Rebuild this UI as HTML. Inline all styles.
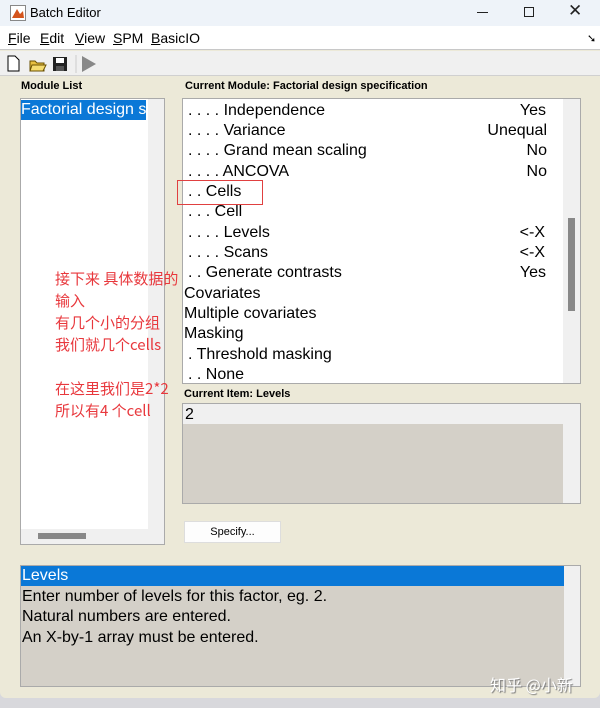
<!DOCTYPE html>
<html><head><meta charset="utf-8"><style>
*{margin:0;padding:0;box-sizing:border-box}
body{width:600px;height:708px;overflow:hidden;background:#d8d8dc;font-family:"Liberation Sans","Noto Sans CJK SC",sans-serif;position:relative}
.a{position:absolute}
.win{left:0;top:0;width:600px;height:698px;background:#ece9d8;border-radius:0 0 6px 6px}
.title{left:0;top:0;width:600px;height:26px;background:#eef3f9}
.menu{left:0;top:26px;width:600px;height:24px;background:#fff;border-bottom:1px solid #c8c8c8;font-size:14px}
.menu span{position:absolute;top:4px}
.tool{left:0;top:51px;width:600px;height:25px;background:#f0f0f0;border-bottom:1px solid #d0d0d0}
.lbl{font-size:11px;font-weight:bold;color:#000}
.row{position:absolute;font-size:16px;line-height:20px;white-space:pre}
.val{position:absolute;font-size:16px;line-height:20px;text-align:right;width:100px}
.ann{color:#e8383d;font-size:15px;line-height:22px;left:55px;top:268px;white-space:pre;font-family:"Noto Sans CJK SC","Liberation Sans",sans-serif}
</style></head><body>
<div class="a win"></div>
<div class="a title">
<svg class="a" style="left:10px;top:5px" width="16" height="16"><rect x="0.5" y="0.5" width="15" height="15" fill="#fff" stroke="#888"/><path d="M2 13 L7 4 L10 9 L13 6 L14 13Z" fill="#d4541c"/></svg>
<div class="a" style="left:30px;top:5px;font-size:13px">Batch Editor</div>
<div class="a" style="left:477px;top:12px;width:11px;height:1px;background:#222"></div>
<div class="a" style="left:524px;top:7px;width:10px;height:10px;border:1px solid #222"></div>
<div class="a" style="left:568px;top:1px;font-size:17px;color:#222">✕</div>
</div>
<div class="a menu"><span style="left:8px"><u>F</u>ile</span><span style="left:40px"><u>E</u>dit</span><span style="left:75px"><u>V</u>iew</span><span style="left:113px"><u>S</u>PM</span><span style="left:151px"><u>B</u>asicIO</span><span style="left:587px;font-size:11px;top:6px">➘</span></div>
<div class="a tool">
<svg class="a" style="left:6px;top:4px" width="90" height="18"><path d="M2 1h7l4 4v11H2z" fill="#fff" stroke="#000"/><path d="M24 6h5l2 2h7v8H24z" fill="#e8c040" stroke="#6a5000"/><path d="M26 10h14l-3 6H24z" fill="#f5dc70" stroke="#6a5000"/><rect x="47" y="2" width="14" height="14" fill="#222"/><rect x="50" y="3" width="8" height="5" fill="#fff"/><rect x="50" y="11" width="8" height="5" fill="#555"/><line x1="70" y1="0" x2="70" y2="18" stroke="#ccc"/><path d="M76 1l14 8-14 8z" fill="#888"/></svg>
</div>
<div class="a lbl" style="left:21px;top:80px">Module List</div>
<div class="a lbl" style="left:185px;top:80px">Current Module: Factorial design specification</div>
<div class="a" style="left:20px;top:98px;width:145px;height:447px;background:#f0f0f0;border:1px solid #aaa"></div>
<div class="a" style="left:21px;top:99px;width:127px;height:430px;background:#fff"></div>
<div class="a" style="left:21px;top:100px;width:125px;height:20px;background:#0a78d7;color:#fff;font-size:16px;line-height:20px;overflow:hidden;white-space:nowrap">Factorial design s</div>
<div class="a" style="left:38px;top:533px;width:48px;height:6px;background:#888"></div>

<div class="a" style="left:182px;top:98px;width:399px;height:286px;background:#fff;border:1px solid #aaa;overflow:hidden">
<div class="a" style="left:380px;top:0;width:18px;height:286px;background:#f0f0f0"></div>
<div class="a" style="left:385px;top:119px;width:7px;height:93px;background:#888"></div>
</div>
<div class="row" style="left:188px;top:101px">. . . . Independence</div><div class="val" style="left:446px;top:101px">Yes</div>
<div class="row" style="left:188px;top:121px">. . . . Variance</div><div class="val" style="left:447px;top:121px">Unequal</div>
<div class="row" style="left:188px;top:141px">. . . . Grand mean scaling</div><div class="val" style="left:447px;top:141px">No</div>
<div class="row" style="left:188px;top:162px">. . . . ANCOVA</div><div class="val" style="left:447px;top:162px">No</div>
<div class="row" style="left:188px;top:182px">. . Cells</div>
<div class="row" style="left:188px;top:202px">. . . Cell</div>
<div class="row" style="left:188px;top:223px">. . . . Levels</div><div class="val" style="left:445px;top:223px">&lt;-X</div>
<div class="row" style="left:188px;top:243px">. . . . Scans</div><div class="val" style="left:445px;top:243px">&lt;-X</div>
<div class="row" style="left:188px;top:263px">. . Generate contrasts</div><div class="val" style="left:446px;top:263px">Yes</div>
<div class="row" style="left:184px;top:284px">Covariates</div>
<div class="row" style="left:184px;top:304px">Multiple covariates</div>
<div class="row" style="left:184px;top:324px">Masking</div>
<div class="row" style="left:188px;top:345px">. Threshold masking</div>
<div class="row" style="left:188px;top:365px;height:18px;overflow:hidden">. . None</div>
<div class="a" style="left:177px;top:180px;width:86px;height:25px;border:1.5px solid #e04040"></div>

<div class="a lbl" style="left:184px;top:388px">Current Item: Levels</div>
<div class="a" style="left:182px;top:403px;width:399px;height:101px;background:#f0f0f0;border:1px solid #aaa">
<div class="a" style="left:0;top:20px;width:380px;height:79px;background:#d4d0c8"></div>
<div class="a" style="left:2px;top:1px;font-size:16px;line-height:20px">2</div>
</div>
<div class="a" style="left:184px;top:521px;width:97px;height:22px;background:#fdfdfd;border:1px solid #ddd;font-size:11px;text-align:center;line-height:21px">Specify...</div>

<div class="a" style="left:20px;top:565px;width:561px;height:122px;background:#f0f0f0;border:1px solid #aaa">
<div class="a" style="left:0;top:0;width:543px;height:120px;background:#d4d0c8"></div>
<div class="a" style="left:0;top:0;width:543px;height:20px;background:#0a78d7;color:#fff;font-size:16px;line-height:20px;padding-left:1px">Levels</div>
<div class="a" style="left:1px;top:21px;font-size:16px;line-height:20.3px;white-space:pre">Enter number of levels for this factor, eg. 2.
Natural numbers are entered.
An X-by-1 array must be entered.</div>
</div>
<div class="a" style="left:490px;top:672px;font-size:16px;color:#fff;text-shadow:1px 1px 1px #777;font-family:'Noto Sans CJK SC',sans-serif">知乎 @小新</div>

<div class="a ann">接下来 具体数据的
输入
有几个小的分组
我们就几个cells

在这里我们是2*2
所以有4 个cell</div>
</body></html>
